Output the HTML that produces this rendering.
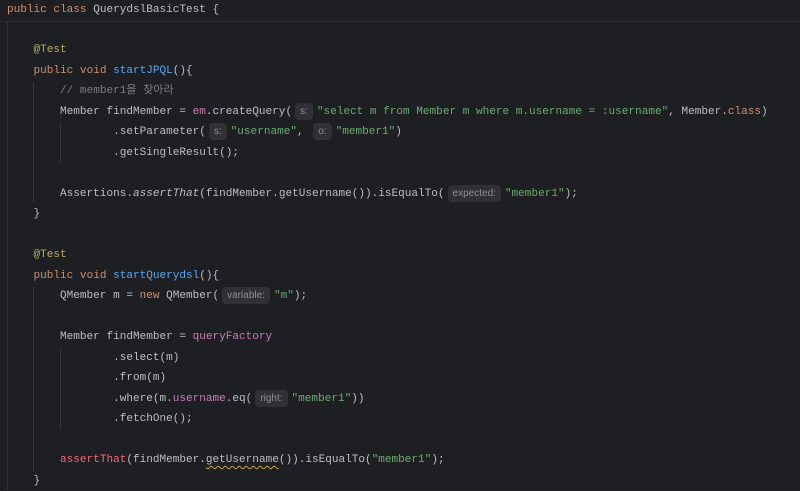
<!DOCTYPE html>
<html><head><meta charset="utf-8"><style>
body{margin:0;width:800px;height:490px;background:#1e1f22;overflow:hidden;position:relative;font-family:"Liberation Mono","Noto Sans CJK KR",monospace;font-size:11.05px;color:#bcbec4}
.l{position:absolute;left:7px;height:20px;line-height:20px;white-space:pre}
.k{color:#cf8e6d}.f{color:#56a8f5}.s{color:#6aab73}.a{color:#b3ae60}.c{color:#7a7e85}.p{color:#c77dbb}.r{color:#fa6675}.i{font-style:italic}
.h{display:inline-block;font-family:"Liberation Sans",sans-serif;font-size:10px;color:#8c8f94;background:#303134;border-radius:4px;padding:0 5px;height:17px;line-height:17px;vertical-align:0px;margin:0 4px 0 3px}
.g{position:absolute;width:1px;background:#34363a}
.w{text-decoration:underline wavy #c9a440;text-underline-offset:3px;text-decoration-thickness:1px}
</style></head><body>
<div style="position:absolute;left:0;top:21px;width:800px;height:1px;background:#2b2d30"></div>
<div class="g" style="left:7px;top:22px;height:468px"></div>
<div class="g" style="left:33px;top:82px;height:120px"></div>
<div class="g" style="left:60px;top:123px;height:40px"></div>
<div class="g" style="left:33px;top:287px;height:184px"></div>
<div class="g" style="left:60px;top:348px;height:82px"></div>
<div class="l" style="top:0px"><span class="k">public class</span> QuerydslBasicTest {</div>
<div class="l" style="top:40px">    <span class="a">@Test</span></div>
<div class="l" style="top:61px">    <span class="k">public void</span> <span class="f">startJPQL</span>(){</div>
<div class="l" style="top:81px">        <span class="c">// member1을 찾아라</span></div>
<div class="l" style="top:102px">        Member findMember = <span class="p">em</span>.createQuery(<span class="h">s:</span><span class="s">"select m from Member m where m.username = :username"</span>, Member.<span class="k">class</span>)</div>
<div class="l" style="top:122px">                .setParameter(<span class="h">s:</span><span class="s">"username"</span>, <span class="h">o:</span><span class="s">"member1"</span>)</div>
<div class="l" style="top:143px">                .getSingleResult();</div>
<div class="l" style="top:184px">        Assertions.<span class="i">assertThat</span>(findMember.getUsername()).isEqualTo(<span class="h">expected:</span><span class="s">"member1"</span>);</div>
<div class="l" style="top:204px">    }</div>
<div class="l" style="top:245px">    <span class="a">@Test</span></div>
<div class="l" style="top:266px">    <span class="k">public void</span> <span class="f">startQuerydsl</span>(){</div>
<div class="l" style="top:286px">        QMember m = <span class="k">new</span> QMember(<span class="h">variable:</span><span class="s">"m"</span>);</div>
<div class="l" style="top:327px">        Member findMember = <span class="p">queryFactory</span></div>
<div class="l" style="top:348px">                .select(m)</div>
<div class="l" style="top:368px">                .from(m)</div>
<div class="l" style="top:389px">                .where(m.<span class="p">username</span>.eq(<span class="h">right:</span><span class="s">"member1"</span>))</div>
<div class="l" style="top:409px">                .fetchOne();</div>
<div class="l" style="top:450px">        <span class="r">assertThat</span>(findMember.<span class="w">getUsername</span>()).isEqualTo(<span class="s">"member1"</span>);</div>
<div class="l" style="top:471px">    }</div>
</body></html>
